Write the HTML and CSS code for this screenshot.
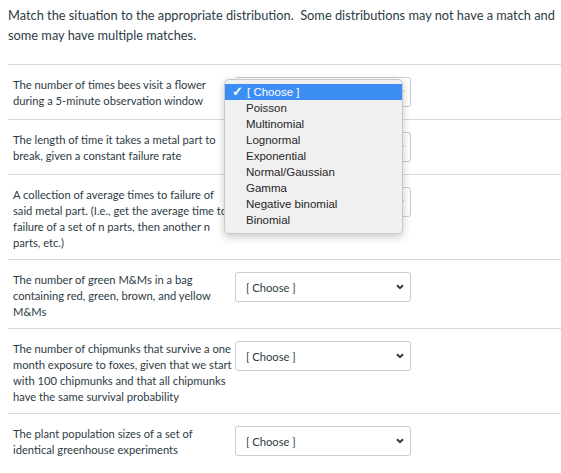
FILE: index.html
```html
<!DOCTYPE html>
<html>
<head>
<meta charset="UTF-8" />
<title>matching question</title>
    <link rel="stylesheet" href="styles.css">
</head>
    <body>
    <div class="question">
        <p class="intro">Match the situation to the appropriate distribution.&nbsp; Some distributions may not have a match and some may have multiple matches.</p>

        <div class="match-row">
            <div class="situation">The number of times bees visit a flower during a 5-minute observation window</div>
            <div class="answer-select">
                <span>[ Choose ]</span>
                <svg class="chevron" width="8" height="6" viewBox="0 0 8 6"><path d="M1 1.2 L4 4.2 L7 1.2" fill="none" stroke="#2d3b45" stroke-width="2"/></svg>
                <!-- open menu of the first answer -->
                <ul class="menu">
                    <li class="picked"><span class="tick">✓</span>[ Choose ]</li>
                    <li>Poisson</li>
                    <li>Multinomial</li>
                    <li>Lognormal</li>
                    <li>Exponential</li>
                    <li>Normal/Gaussian</li>
                    <li>Gamma</li>
                    <li>Negative binomial</li>
                    <li>Binomial</li>
                </ul>
            </div>
        </div>

        <div class="match-row">
            <div class="situation">The length of time it takes a metal part to break, given a constant failure rate</div>
            <div class="answer-select">
                <span>[ Choose ]</span>
                <svg class="chevron" width="8" height="6" viewBox="0 0 8 6"><path d="M1 1.2 L4 4.2 L7 1.2" fill="none" stroke="#2d3b45" stroke-width="2"/></svg>
            </div>
        </div>

        <div class="match-row">
            <div class="situation">A collection of average times to failure of said metal part. (I.e., get the average time to failure of a set of n parts, then another n parts, etc.)</div>
            <div class="answer-select">
                <span>[ Choose ]</span>
                <svg class="chevron" width="8" height="6" viewBox="0 0 8 6"><path d="M1 1.2 L4 4.2 L7 1.2" fill="none" stroke="#2d3b45" stroke-width="2"/></svg>
            </div>
        </div>

        <div class="match-row">
            <div class="situation">The number of green M&amp;Ms in a bag containing red, green, brown, and yellow M&amp;Ms</div>
            <div class="answer-select">
                <span>[ Choose ]</span>
                <svg class="chevron" width="8" height="6" viewBox="0 0 8 6"><path d="M1 1.2 L4 4.2 L7 1.2" fill="none" stroke="#2d3b45" stroke-width="2"/></svg>
            </div>
        </div>

        <div class="match-row">
            <div class="situation">The number of chipmunks that survive a one month exposure to foxes, given that we start with 100 chipmunks and that all chipmunks have the same survival probability</div>
            <div class="answer-select">
                <span>[ Choose ]</span>
                <svg class="chevron" width="8" height="6" viewBox="0 0 8 6"><path d="M1 1.2 L4 4.2 L7 1.2" fill="none" stroke="#2d3b45" stroke-width="2"/></svg>
            </div>
        </div>

        <div class="match-row">
            <div class="situation">The plant population sizes of a set of identical greenhouse experiments</div>
            <div class="answer-select">
                <span>[ Choose ]</span>
                <svg class="chevron" width="8" height="6" viewBox="0 0 8 6"><path d="M1 1.2 L4 4.2 L7 1.2" fill="none" stroke="#2d3b45" stroke-width="2"/></svg>
            </div>
        </div>
    </div>
    </body>
</html>
```

FILE: styles.css
```css
body {
  margin: 0;
  background: #fff;
  color: #2d3b45;
  font-family: Lato, "Open Sans", sans-serif;
}
.question {
  padding: 5px 0 0 8px;
}
.intro {
  margin: 0 0 19px 0;
  font-size: 12.8px;
  line-height: 20px;
}
.match-row {
  display: flex;
  align-items: flex-start;
  border-top: 1px solid #d7dadd;
  padding: 12px 0 8px 5px;
}
.situation {
  flex: none;
  width: 222px;
  font-size: 11.2px;
  line-height: 16px;
}
.answer-select {
  position: relative;
  display: flex;
  align-items: center;
  justify-content: space-between;
  box-sizing: border-box;
  width: 176px;
  height: 30px;
  margin: 0 0 4px 0;
  padding: 0 6px 0 10px;
  border: 1px solid #c7cdd1;
  border-radius: 3px;
  font-size: 11.2px;
}
.chevron {
  display: block;
}
.menu {
  position: absolute;
  left: -12px;
  top: 1px;
  z-index: 2;
  width: 179px;
  margin: 0;
  padding: 4px 0 5px 0;
  list-style: none;
  box-sizing: border-box;
  background: #f0f0f0;
  border: 1px solid #c9c9c9;
  border-radius: 5px;
  box-shadow: 0 3px 8px rgba(0, 0, 0, 0.22);
  font-family: "Liberation Sans", Arial, sans-serif;
  font-size: 11.5px;
  color: #262626;
}
.menu li {
  height: 16px;
  line-height: 16px;
  padding-left: 21px;
}
.menu li.picked {
  background: #3d8ef4;
  color: #fff;
}
.tick {
  display: inline-block;
  width: 15px;
  margin-left: -14px;
  font-size: 13px;
  font-weight: bold;
}
```
